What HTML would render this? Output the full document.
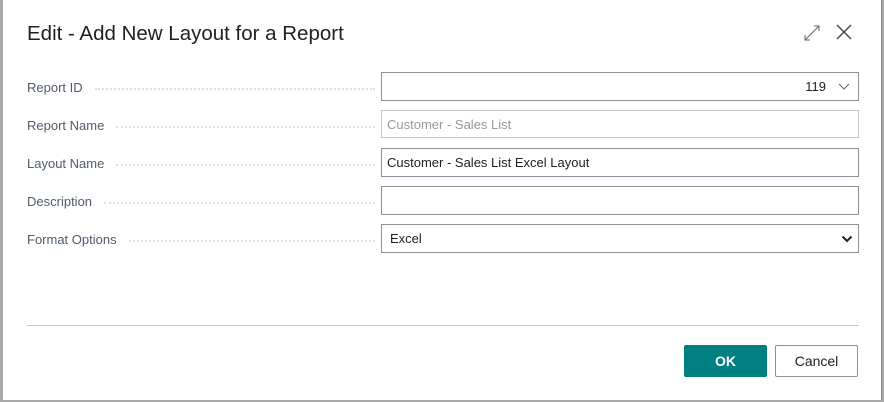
<!DOCTYPE html>
<html><head><style>
body{margin:0;width:884px;height:402px;background:#a9a9a9;font-family:"Liberation Sans",sans-serif;position:relative;overflow:hidden}
.dlg{position:absolute;left:3px;top:0;width:878px;height:400px;background:#fff;border-right:1px solid #888}
.t{position:absolute;left:24px;top:22px;font-size:20.5px;color:#212121}
.lbl{position:absolute;left:27px;font-size:13px;color:#505c6d;width:348px;display:flex;align-items:center}
.lbl span{padding-right:12px;white-space:nowrap}
.lbl i{flex:1;border-bottom:2px dotted #e0e0e0;height:0;margin-top:2px}
.f{position:absolute;left:381px;width:476px;box-sizing:border-box;border:1px solid #8a8f96;font-size:13px;color:#212121;padding:0 5px;display:flex;align-items:center}
.sep{position:absolute;left:27px;width:832px;top:325px;border-top:1px solid #c8c8c8}
.btn{position:absolute;top:345px;height:32px;width:83px;box-sizing:border-box;font-size:14px;display:flex;align-items:center;justify-content:center;border-radius:2px}
</style></head><body>
<div class="dlg">
<div class="t">Edit - Add New Layout for a Report</div>
<svg style="position:absolute;left:800px;top:24px" width="18" height="18"><path d="M2 16L16 2M11 2H16V7M2 11V16H7" stroke="#666" fill="none" stroke-width="1"/></svg>
<svg style="position:absolute;left:831px;top:22px" width="20" height="20"><path d="M3 3L17 17M17 3L3 17" stroke="#444" fill="none" stroke-width="1.4"/></svg>
</div>
<div class="lbl" style="top:80px"><span>Report ID</span><i></i></div>
<div class="lbl" style="top:118px"><span>Report Name</span><i></i></div>
<div class="lbl" style="top:156px"><span>Layout Name</span><i></i></div>
<div class="lbl" style="top:194px"><span>Description</span><i></i></div>
<div class="lbl" style="top:232px"><span>Format Options</span><i></i></div>
<div class="f" style="top:72px;height:29px;justify-content:flex-end;padding-right:8px;width:478px">119<svg style="margin-left:12px" width="12" height="8"><path d="M1 1L6 6L11 1" stroke="#666" fill="none"/></svg></div>
<div class="f" style="top:110px;height:28px;border-color:#c8c8c8;color:#999;width:478px">Customer - Sales List</div>
<div class="f" style="top:148px;height:29px;width:478px">Customer - Sales List Excel Layout</div>
<div class="f" style="top:186px;height:29px;width:478px"></div>
<div class="f" style="top:224px;height:29px;width:478px;padding-left:8px;justify-content:space-between">Excel<svg width="12" height="8"><path d="M1.5 1.5L6 6L10.5 1.5" stroke="#222" fill="none" stroke-width="2"/></svg></div>
<div class="sep"></div>
<div class="btn" style="left:684px;background:#008080;color:#fff;font-weight:bold">OK</div>
<div class="btn" style="left:775px;border:1px solid #8a8f96;color:#212121;background:#fff">Cancel</div>
</body></html>
